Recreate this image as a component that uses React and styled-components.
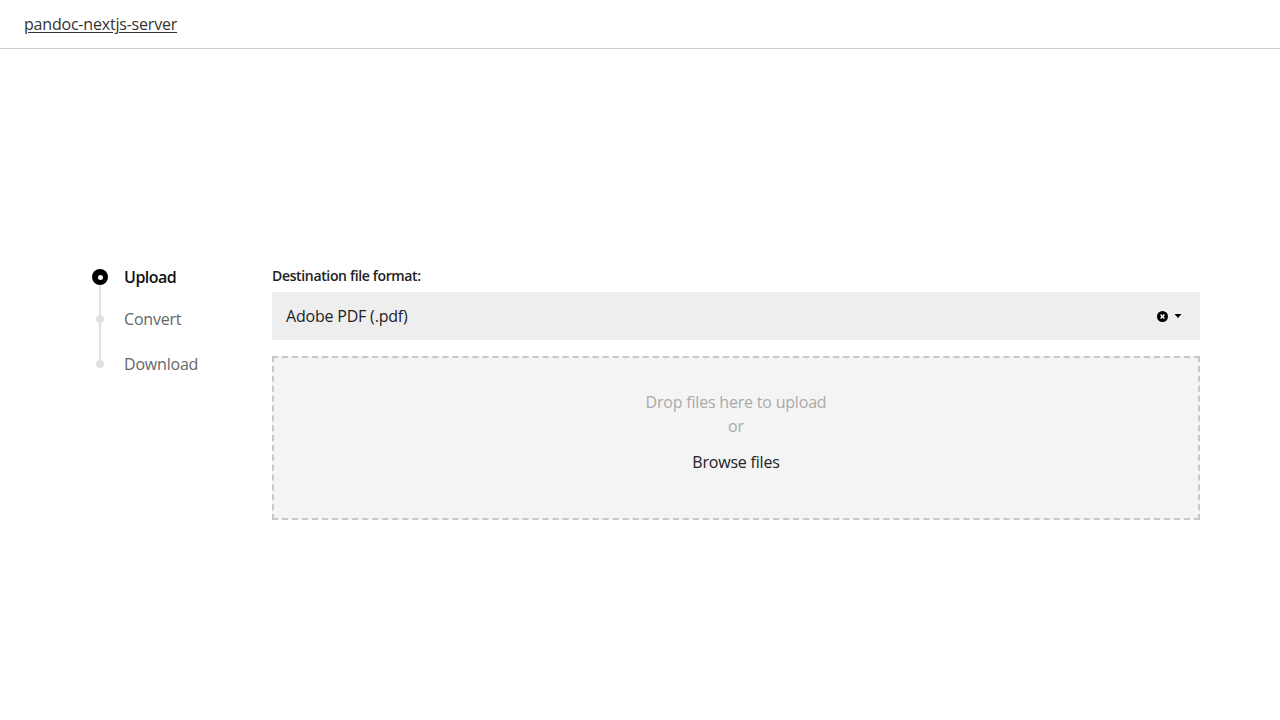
import React from "react";
import styled, { createGlobalStyle } from "styled-components";

const Global = createGlobalStyle`
  html, body { margin: 0; padding: 0; background: #fff; }
  body { font-family: "Open Sans", "Noto Sans", sans-serif; color: #222; }
  * { box-sizing: border-box; }
`;

const Header = styled.header`
  height: 49px;
  border-bottom: 1px solid #cccccc;
  display: flex;
  align-items: center;
  padding: 0 24px;
`;

const Brand = styled.a`
  font-size: 16px;
  color: #333;
  text-decoration: underline;
  text-underline-offset: 2px;
  letter-spacing: -0.2px;
`;

const Main = styled.main`
  display: flex;
  padding: 218px 80px 0 80px;
`;

const Steps = styled.ol`
  list-style: none;
  margin: 0;
  padding: 0;
  width: 192px;
  flex-shrink: 0;
  position: relative;
  &::before {
    content: "";
    position: absolute;
    left: 19px;
    top: 14px;
    height: 86px;
    width: 2px;
    background: #e0e0e0;
  }
`;

const Step = styled.li`
  display: flex;
  align-items: center;
  height: ${(p) => p.$h}px;
  padding-top: ${(p) => p.$pt || 0}px;
  font-size: 16px;
  color: ${(p) => (p.$active ? "#111" : "#666")};
  font-weight: ${(p) => (p.$active ? 600 : 400)};
  letter-spacing: ${(p) => (p.$active ? "-0.5px" : "-0.2px")};
  position: relative;
`;

const DotWrap = styled.span`
  width: 40px;
  display: flex;
  justify-content: center;
  margin-right: 4px;
`;

const ActiveDot = styled.span`
  width: 16px;
  height: 16px;
  border-radius: 50%;
  background: #000;
  display: flex;
  align-items: center;
  justify-content: center;
  &::after {
    content: "";
    width: 5px;
    height: 5px;
    border-radius: 50%;
    background: #fff;
  }
`;

const Dot = styled.span`
  width: 8px;
  height: 8px;
  border-radius: 50%;
  background: #e0e0e0;
`;

const Content = styled.section`
  flex: 1;
  display: flex;
  flex-direction: column;
`;

const Label = styled.label`
  font-size: 14px;
  font-weight: 600;
  color: #222;
  line-height: 16px;
  letter-spacing: -0.35px;
  margin-top: 1px;
  margin-bottom: 8px;
`;

const Select = styled.div`
  height: 48px;
  background: #eeeeee;
  display: flex;
  align-items: center;
  padding: 0 14px;
  font-size: 16px;
  color: #222;
`;

const SelectValue = styled.span`
  flex: 1;
  letter-spacing: -0.2px;
`;

const Icons = styled.span`
  display: flex;
  align-items: center;
  gap: 5px;
  margin-right: 3px;
`;

const Dropzone = styled.div`
  margin-top: 16px;
  height: 164px;
  background: #f4f4f4;
  border: 2px dashed #c8c8c8;
  display: flex;
  flex-direction: column;
  align-items: center;
  justify-content: center;
  padding-bottom: 12px;
  font-size: 16px;
`;

const Hint = styled.span`
  color: #aaa;
  line-height: 24px;
  letter-spacing: -0.2px;
`;

const Browse = styled.button`
  margin-top: 12px;
  background: none;
  border: none;
  font: inherit;
  font-size: 16px;
  color: #222;
  padding: 0;
  line-height: 24px;
  letter-spacing: -0.2px;
  cursor: pointer;
`;

export default function App() {
  return (
    <>
      <Global />
      <Header>
        <Brand href="#">pandoc-nextjs-server</Brand>
      </Header>
      <Main>
        <Steps>
          <Step $active $h={20}>
            <DotWrap><ActiveDot /></DotWrap>
            Upload
          </Step>
          <Step $h={44} $pt={20}>
            <DotWrap><Dot /></DotWrap>
            Convert
          </Step>
          <Step $h={44} $pt={22}>
            <DotWrap><Dot /></DotWrap>
            Download
          </Step>
        </Steps>
        <Content>
          <Label>Destination file format:</Label>
          <Select>
            <SelectValue>Adobe PDF (.pdf)</SelectValue>
            <Icons>
              <svg width="11" height="11" viewBox="0 0 11 11">
                <circle cx="5.5" cy="5.5" r="5.5" fill="#000" />
                <path d="M3.6 3.6 L7.4 7.4 M7.4 3.6 L3.6 7.4" stroke="#fff" strokeWidth="1.4" />
              </svg>
              <svg width="10" height="10" viewBox="0 0 10 10">
                <path d="M1.5 3 L8.5 3 L5 7 Z" fill="#000" />
              </svg>
            </Icons>
          </Select>
          <Dropzone>
            <Hint>Drop files here to upload</Hint>
            <Hint>or</Hint>
            <Browse>Browse files</Browse>
          </Dropzone>
        </Content>
      </Main>
    </>
  );
}
